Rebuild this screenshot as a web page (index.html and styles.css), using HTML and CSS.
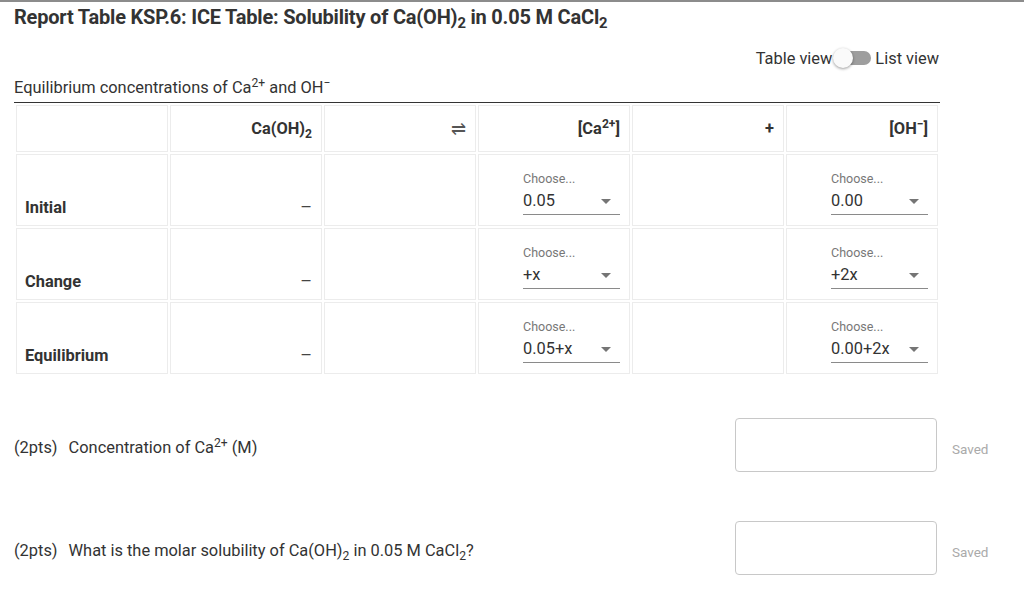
FILE: index.html
```html
<!DOCTYPE html>
<html>
<head>
<meta charset="utf-8">
<link rel="stylesheet" href="styles.css">
</head>
<body>
<div class="page">
  <h1 class="title">Report Table KSP.6: ICE Table: Solubility of Ca(OH)<sub>2</sub> in 0.05 M CaCl<sub>2</sub></h1>
  <div class="view-toggle">
    <span>Table view</span>
    <span class="switch"><span class="knob"></span></span>
    <span>List view</span>
  </div>
  <div class="caption">Equilibrium concentrations of Ca<sup>2+</sup> and OH<sup>−</sup></div>
  <table class="ice">
    <thead>
      <tr>
        <th></th>
        <th>Ca(OH)<sub>2</sub></th>
        <th><span class="eq">⇌</span></th>
        <th>[Ca<sup>2+</sup>]</th>
        <th>+</th>
        <th>[OH<sup>−</sup>]</th>
      </tr>
    </thead>
    <tbody>
      <tr>
        <td class="label">Initial</td>
        <td class="dash">–</td>
        <td></td>
        <td class="sel-cell"><div class="select"><div class="hint">Choose...</div><div class="value"><span>0.05</span><span class="arrow"></span></div></div></td>
        <td></td>
        <td class="sel-cell"><div class="select"><div class="hint">Choose...</div><div class="value"><span>0.00</span><span class="arrow"></span></div></div></td>
      </tr>
      <tr>
        <td class="label">Change</td>
        <td class="dash">–</td>
        <td></td>
        <td class="sel-cell"><div class="select"><div class="hint">Choose...</div><div class="value"><span>+x</span><span class="arrow"></span></div></div></td>
        <td></td>
        <td class="sel-cell"><div class="select"><div class="hint">Choose...</div><div class="value"><span>+2x</span><span class="arrow"></span></div></div></td>
      </tr>
      <tr>
        <td class="label">Equilibrium</td>
        <td class="dash">–</td>
        <td></td>
        <td class="sel-cell"><div class="select"><div class="hint">Choose...</div><div class="value"><span>0.05+x</span><span class="arrow"></span></div></div></td>
        <td></td>
        <td class="sel-cell"><div class="select"><div class="hint">Choose...</div><div class="value"><span>0.00+2x</span><span class="arrow"></span></div></div></td>
      </tr>
    </tbody>
  </table>

  <div class="question q1">
    <div class="qtext"><span class="pts">(2pts)</span>Concentration of Ca<sup>2+</sup> (M)</div>
    <div class="answer"></div>
    <div class="saved">Saved</div>
  </div>
  <div class="question q2">
    <div class="qtext"><span class="pts">(2pts)</span>What is the molar solubility of Ca(OH)<sub>2</sub> in 0.05 M CaCl<sub>2</sub>?</div>
    <div class="answer"></div>
    <div class="saved">Saved</div>
  </div>
</div>
</body>
</html>
```

FILE: styles.css
```css
html, body {
  margin: 0;
  padding: 0;
  background: #fff;
}
body {
  border-top: 2px solid #8c8c8c;
  font-family: Roboto, "Liberation Sans", Arial, sans-serif;
  color: #333;
}
.page {
  width: 926px;
  padding: 0 0 0 14px;
}
sub, sup {
  font-size: 0.74em;
  line-height: 0;
  position: relative;
  vertical-align: baseline;
}
sub { bottom: -0.3em; }
sup { top: -0.5em; }

.title {
  margin: 3px 0 0 0;
  font-size: 20px;
  line-height: 24px;
  font-weight: 700;
  color: #333;
  letter-spacing: -0.2px;
}

.view-toggle {
  display: flex;
  justify-content: flex-end;
  align-items: center;
  margin-top: 19px;
  height: 20px;
  font-size: 16.4px;
  color: #333;
  padding-right: 1px;
}
.switch {
  position: relative;
  width: 36px;
  height: 14px;
  margin: 0 4px 0 3px;
  border-radius: 7px;
  background: #9e9e9e;
}
.knob {
  position: absolute;
  left: -2px;
  top: -3px;
  width: 20px;
  height: 20px;
  border-radius: 50%;
  background: #fafafa;
  box-shadow: 0 1px 3px rgba(0,0,0,0.4);
}

.caption {
  margin-top: 10px;
  font-size: 16.4px;
  line-height: 20px;
  padding-bottom: 4px;
  border-bottom: 1px solid #333;
}

.ice {
  width: 926px;
  table-layout: fixed;
  border-collapse: separate;
  border-spacing: 2px;
  margin-top: 0;
  font-size: 16.4px;
  color: #333;
}
.ice th, .ice td {
  border: 1px solid #ececec;
  padding: 0 9px;
}
.ice th {
  height: 45px;
  text-align: right;
  font-weight: 700;
  vertical-align: middle;
}
.ice .eq {
  font-weight: 400;
  color: #555;
  font-size: 18px;
}
.ice td {
  height: 72px;
  vertical-align: bottom;
  padding-bottom: 8px;
  box-sizing: border-box;
}
.ice td.label {
  font-weight: 700;
  text-align: left;
  padding-left: 8px;
  padding-bottom: 8px;
}
.ice td.dash {
  text-align: right;
  padding-bottom: 8px;
  color: #444;
  font-size: 18px;
}
.ice td.sel-cell {
  padding-bottom: 10px;
}
.select {
  width: 97px;
  margin-left: auto;
}
.hint {
  font-size: 12.5px;
  line-height: 15px;
  color: #777;
  margin-bottom: 5px;
}
.value {
  display: flex;
  justify-content: space-between;
  align-items: center;
  font-size: 16.4px;
  line-height: 20px;
  padding-bottom: 3px;
  border-bottom: 1px solid #8a8a8a;
  color: #333;
}
.arrow {
  width: 0;
  height: 0;
  margin-right: 9px;
  border-left: 5px solid transparent;
  border-right: 5px solid transparent;
  border-top: 5px solid #757575;
}

.question {
  display: flex;
  align-items: center;
  margin-right: -87px;
  font-size: 16.4px;
}
.q1 { margin-top: 42px; }
.q2 { margin-top: 49px; }
.qtext {
  flex: 1;
  padding-top: 5px;
}
.pts {
  margin-right: 11px;
}
.answer {
  width: 200px;
  height: 52px;
  border: 1px solid #c8c8c8;
  border-radius: 4px;
  margin-right: -1px;
}
.saved {
  width: 75px;
  margin-left: 16px;
  padding-top: 7px;
  font-size: 13.5px;
  color: #aaa;
}
```
